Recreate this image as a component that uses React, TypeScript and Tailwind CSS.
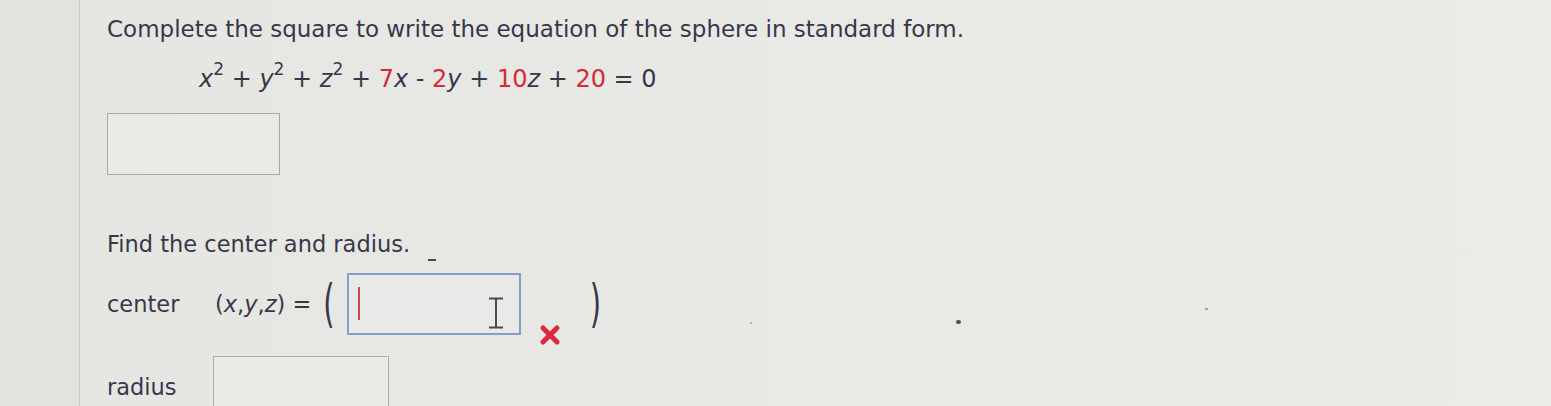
import React from "react";

const INK = "text-[#38374a]";

function RedCross() {
  return (
    <svg width="24" height="24" viewBox="0 0 24 24" className="shrink-0">
      <path d="M5 5 L19 19 M19 5 L5 19" stroke="#e0283c" strokeWidth="5" strokeLinecap="round" />
    </svg>
  );
}

function IBeam() {
  return (
    <svg width="18" height="32" viewBox="0 0 18 32">
      <path d="M2 1.5 H16 M9 1.5 V30.5 M2 30.5 H16" stroke="#4a4a4e" strokeWidth="2" fill="none" />
    </svg>
  );
}

function Sq({ v }: { v: string }) {
  return (
    <>
      <i>{v}</i>
      <span className="relative -top-[12px] text-[17px] leading-none">2</span>
    </>
  );
}

export default function App() {
  return (
    <div className="relative flex h-[406px] w-[1551px] overflow-hidden bg-gradient-to-r from-[#e5e6e2] to-[#ecebe7] font-['DejaVu_Sans',sans-serif]">
      <div className="w-[80px] shrink-0 border-r border-[#c8c5c5] bg-[#e2e3df]" />

      <div className={`flex-1 pl-[27px] pt-[14px] ${INK}`}>
        <p className="text-[23px] leading-[30px]">
          Complete the square to write the equation of the sphere in standard form.
        </p>

        <p className="mt-[20px] pl-[92px] text-[24px] leading-[30px] whitespace-pre">
          <Sq v="x" />
          {" + "}
          <Sq v="y" />
          {" + "}
          <Sq v="z" />
          {" + "}
          <span className="text-[#d62a3c]">7</span>
          <i>x</i>
          {" - "}
          <span className="text-[#d62a3c]">2</span>
          <i>y</i>
          {" + "}
          <span className="text-[#d62a3c]">10</span>
          <i>z</i>
          {" + "}
          <span className="text-[#d62a3c]">20</span>
          {" = 0"}
        </p>

        <div className="mt-[19px] h-[62px] w-[173px] border border-[#a9a8a6] bg-[#e9e9e6]" />

        <p className="mt-[54px] flex h-[30px] items-center text-[22.5px] leading-[30px]">
          Find the center and radius.
          <span className="relative top-[16px] ml-[18px] inline-block h-[2px] w-[8px] bg-[#4a4560]" />
        </p>

        <div className="mt-[14px] flex h-[62px] items-center text-[22.5px] leading-[30px]">
          <span className="w-[108px]">center</span>
          <span>
            (<i>x</i>,<i>y</i>,<i>z</i>) =
          </span>
          <span className="ml-[12px] inline-block origin-center scale-y-[1.75] text-[29px] leading-none">(</span>
          <div className="relative ml-[12px] h-[62px] w-[174px] border-2 border-[#83a0c6] bg-[#e9eae8]">
            <span className="absolute left-[9px] top-[12px] h-[33px] w-[2px] bg-[#c2485a]" />
            <span className="absolute left-[138px] top-[22px]">
              <IBeam />
            </span>
          </div>
          <span className="relative top-[31px] ml-[17px]">
            <RedCross />
          </span>
          <span className="ml-[28px] inline-block origin-center scale-y-[1.75] text-[29px] leading-none">)</span>
        </div>

        <div className="mt-[21px] flex h-[62px] items-center text-[22.5px] leading-[30px]">
          <span className="w-[106px]">radius</span>
          <div className="h-[62px] w-[176px] border border-[#aeadab] bg-[#eaeae7]" />
        </div>
      </div>

      <span className="absolute left-[956px] top-[320px] h-[4px] w-[5px] rounded-full bg-[#5a4f55]" />
      <span className="absolute left-[750px] top-[322px] h-[2px] w-[2px] rounded-full bg-[#a09c9c]" />
      <span className="absolute left-[1205px] top-[308px] h-[2px] w-[3px] rounded-full bg-[#9a9696]" />
    </div>
  );
}
